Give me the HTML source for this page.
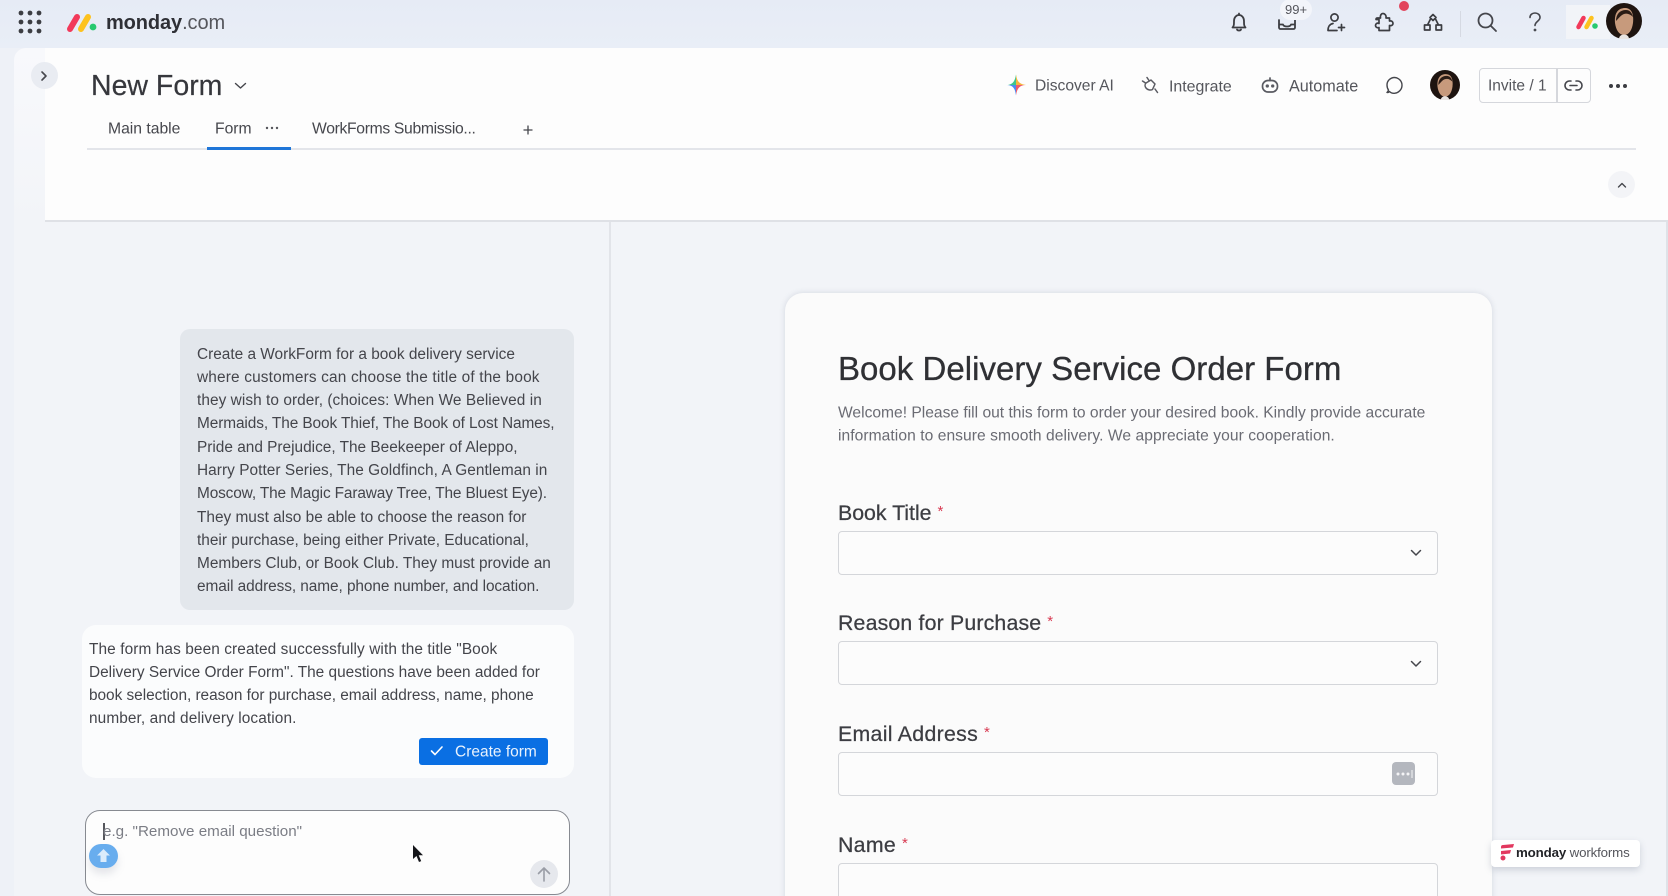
<!DOCTYPE html>
<html lang="en">
<head>
<meta charset="utf-8">
<title>New Form</title>
<style>
*{box-sizing:border-box}
html,body{margin:0;padding:0;width:1668px;height:896px;overflow:hidden}
body{background:#eef1f7;font-family:"Liberation Sans",sans-serif;color:#3a3b40}
#p{position:absolute;left:0;top:0;width:1668px;height:896px;overflow:hidden;background:#eef1f7}
.a{position:absolute}
.t{position:absolute;white-space:nowrap;transform:translateY(-50%);line-height:1.2}
svg{position:absolute;overflow:visible}
.i{fill:none;stroke:#45464c;stroke-width:1.6;stroke-linecap:round;stroke-linejoin:round}
.f{position:absolute;left:838px;width:600px;height:44px;border:1.5px solid #d4d6da;border-radius:4px;background:#fcfcfc}
.l{font-size:21.3px;color:#3c3d42;left:838px;-webkit-text-stroke:.25px #3c3d42}
.l b{color:#d83a52;font-weight:400;font-size:15px;position:relative;top:-4px;margin-left:6px;-webkit-text-stroke:0}
.msg{position:absolute;white-space:pre;font-size:15.4px;line-height:23.3px;color:#44454b}
</style>
</head>
<body>
<div id="p">
<div class="a" style="left:0;top:0;width:1668px;height:48px;background:linear-gradient(180deg,#e6ebf5,#e9eef7)"></div>
<div class="a" style="left:14px;top:48px;width:1654px;height:848px;background:linear-gradient(180deg,#f8f9fc 0,#f2f4f8 180px);border-top-left-radius:12px"></div>
<div class="a" style="left:45px;top:48px;width:1623px;height:173px;background:#fdfdfd"></div>
<div class="a" style="left:45px;top:221px;width:1623px;height:222px;background:#f2f4f8"></div>
<div class="a" style="left:45px;top:220px;width:1623px;height:2px;background:#dfe1e6"></div>
<div class="a" style="left:609px;top:222px;width:2px;height:674px;background:#e2e4e9"></div>
<div class="a" style="left:1666px;top:222px;width:2px;height:674px;background:#dfe2e8"></div>

<!-- grid -->
<svg style="left:0;top:0" width="60" height="48" fill="#3c3d42">
<circle cx="21" cy="13" r="2.4"/><circle cx="30" cy="13" r="2.4"/><circle cx="39" cy="13" r="2.4"/>
<circle cx="21" cy="22" r="2.4"/><circle cx="30" cy="22" r="2.4"/><circle cx="39" cy="22" r="2.4"/>
<circle cx="21" cy="31" r="2.4"/><circle cx="30" cy="31" r="2.4"/><circle cx="39" cy="31" r="2.4"/>
</svg>
<!-- logo -->
<svg style="left:66px;top:12px" width="32" height="22">
<path d="M4 17 L11 5" stroke="#f2395a" stroke-width="6" stroke-linecap="round"/>
<path d="M15 17 L22 5" stroke="#fdc21f" stroke-width="6" stroke-linecap="round"/>
<circle cx="27" cy="15" r="3.4" fill="#27c96f"/>
</svg>
<div class="t" style="left:106px;top:23px;font-size:20px;color:#2f3036;letter-spacing:-.1px"><b>monday</b><span style="color:#55565c">.com</span></div>

<!-- top right icons -->
<svg class="i" style="left:1229px;top:12px;stroke:#3c3d42;stroke-width:1.800" width="20" height="20" viewBox="0 0 20 20"><path d="M3.500 15.500c1.500-1.500 1.500-3 1.500-6.500C5 5.800 7 3 10 3s5 2.800 5 6c0 3.500 0 5 1.500 6.500zM8 17.500c.5 1.300 3.500 1.300 4 0M10 1.500V3"/></svg>
<svg class="i" style="left:1277px;top:14px;stroke:#3c3d42;stroke-width:1.800" width="20" height="17" viewBox="0 0 20 17"><path d="M2 6v7.500A1.500 1.500 0 0 0 3.500 15h13a1.500 1.500 0 0 0 1.500-1.500V6M2 10.500h4c.5 1.500 2 2 4 2s3.500-.5 4-2h4"/></svg>
<div class="a" style="left:1280px;top:-1px;width:32px;height:21px;background:#f3f5fa;border-radius:12px"></div>
<div class="t" style="left:1285px;top:10px;font-size:13px;color:#55565c">99+</div>
<svg class="i" style="left:1326px;top:12px;stroke:#3c3d42;stroke-width:1.700" width="20" height="20" viewBox="0 0 20 20"><circle cx="8.500" cy="5.500" r="3.600"/><path d="M2 18.500c0-4 2-6.500 5-7M2 18.500h9M15.500 12.500v6M12.500 15.500h6"/></svg>
<svg class="i" style="left:1374px;top:12px;stroke:#3c3d42;stroke-width:1.700" width="20" height="20" viewBox="0 0 20 20"><path d="M2 7.500c0-1 .5-1.500 1.500-1.500H6.500C6 3 7.500 1.500 9 1.500S12.500 3 12 6h3.500v3c2.500-.5 3.500 1 3.500 2.500S17.500 14 15.500 13.500V18.500H5v-3c-2 .7-3.500-.5-3.500-2S3 10.500 5 11.500V7.500z"/></svg>
<div class="a" style="left:1399px;top:1px;width:10px;height:10px;border-radius:50%;background:#e2445c"></div>
<svg class="i" style="left:1423px;top:13px;stroke:#3c3d42;stroke-width:1.700" width="20" height="18" viewBox="0 0 20 18"><path d="M10 1.500l3 3-3 3-3-3zM1.500 12h5.500v5H1.500zM13 12h5.500v5H13zM7.500 6L4.500 12M12.500 6l3 6"/></svg>
<div class="a" style="left:1460px;top:11px;width:1px;height:26px;background:#d5d9e2"></div>
<svg class="i" style="left:1476px;top:11px;stroke-width:1.800" width="22" height="22" viewBox="0 0 22 22"><circle cx="9.500" cy="9.500" r="7"/><path d="M14.700 14.700L20 20"/></svg>
<svg class="i" style="left:1525px;top:11px" width="20" height="22" viewBox="0 0 20 22"><path d="M5 6.500C5 3.500 7.500 2 10 2s5 1.500 5 4.500c0 3.500-5 4-5 8"/><circle cx="10" cy="19" r=".6"/></svg>
<div class="a" style="left:1566px;top:5px;width:44px;height:34px;background:#f2f4f8"></div>
<svg style="left:1575px;top:13px" width="24" height="18">
<path d="M3.500 14 L8.500 5" stroke="#f2395a" stroke-width="4.500" stroke-linecap="round"/>
<path d="M11.500 14 L16.500 5" stroke="#fdc21f" stroke-width="4.500" stroke-linecap="round"/>
<circle cx="20" cy="13" r="2.800" fill="#27c96f"/>
</svg>
<svg style="left:1606px;top:3px" width="36" height="36" viewBox="0 0 36 36">
<circle cx="18" cy="18" r="18" fill="#1e1410"/>
<path d="M9 20C8 9 13 5 19 5c6 0 9 5 8 15-1 7-4 12-9 12s-8-5-9-12z" fill="#c79a7c"/>
<path d="M10 18c0-7 4-11 10-11 4 0 6 3 7 7-3-3-6-4-9-3-3 1-5 4-8 7z" fill="#2b1c15"/>
<path d="M13 36c0-6 10-6 10 0z" fill="#e9e5e2"/>
</svg>

<!-- collapse -->
<div class="a" style="left:31px;top:62px;width:27px;height:27px;border-radius:50%;background:#e9ecf2"></div>
<svg class="i" style="left:40px;top:71px" width="9" height="10"><path d="M2 1l4 4-4 4"/></svg>

<!-- board header -->
<div class="t" style="left:91px;top:86px;font-size:28.500px;color:#36373c;-webkit-text-stroke:.2px #36373c">New Form</div>
<svg class="i" style="left:234px;top:82px;stroke-width:1.400" width="13" height="8"><path d="M1.500 1.500L6.500 6l5-4.500"/></svg>

<div class="t" style="left:108px;top:129.500px;font-size:15.700px;color:#46474d">Main table</div>
<div class="t" style="left:215px;top:129.500px;font-size:15.700px;color:#46474d">Form</div>
<svg style="left:265px;top:125px" width="15" height="6" fill="#55565c"><circle cx="2" cy="3" r="1.200"/><circle cx="7" cy="3" r="1.200"/><circle cx="12" cy="3" r="1.200"/></svg>
<div class="t" style="left:312px;top:129.500px;font-size:15.700px;color:#46474d;letter-spacing:-.32px">WorkForms Submissio...</div>
<svg class="i" style="left:523px;top:125px;stroke-width:1.300" width="10" height="10"><path d="M5 1v8M1 5h8"/></svg>
<div class="a" style="left:87px;top:148px;width:1549px;height:2px;background:#e3e5ea"></div>
<div class="a" style="left:207px;top:147px;width:84px;height:2.500px;background:#1f76d8"></div>

<!-- header actions -->
<svg style="left:1005px;top:74px" width="22" height="22" viewBox="0 0 22 22">
<path d="M11 0.500 C11.500 7 11.500 7 11 11 L3 11 C8 10 10 7 11 0.500z" fill="#3dc68a"/>
<path d="M11 0.500 C12 7 14 10 21 11 L11 11z" fill="#f5b53f"/>
<path d="M1 11 C7 11 10 13 11 21.500 L11 11z" fill="#4b8bf0"/>
<path d="M21 11 C15 11 12 14 11 21.500 L11 11z" fill="#ef5a6b"/>
</svg>
<div class="t" style="left:1035px;top:86.500px;font-size:15.600px;color:#55565c">Discover AI</div>
<svg class="i" style="left:1141px;top:76px;stroke-width:1.500;stroke:#5a5b62" width="18" height="18" viewBox="0 0 18 18"><path d="M1.500 5l3 2M6 1.500l2 3M14 13l2.500 3.500M5 7l5-3 4 4-2.500 5.500c-2 1-5 .5-6.500-1.500S4 8 5 7z"/></svg>
<div class="t" style="left:1169px;top:86.500px;font-size:15.900px;color:#55565c">Integrate</div>
<svg class="i" style="left:1261px;top:76px;stroke-width:1.700;stroke:#5a5b62" width="18" height="18" viewBox="0 0 18 18"><rect x="1.500" y="4.500" width="15" height="11.500" rx="5.500"/><path d="M9 4.500V2"/><circle cx="6.300" cy="10" r=".8"/><circle cx="11.700" cy="10" r=".8"/></svg>
<div class="t" style="left:1289px;top:86.500px;font-size:16.200px;color:#55565c">Automate</div>
<svg class="i" style="left:1384px;top:75px;stroke-width:1.400" width="20" height="20" viewBox="0 0 20 20"><path d="M3 17.500c1 .2 2-.3 2.500-1C7 18 9 18.500 11 18.200c4-.5 7-4 7-8C18 6 14.500 2.500 10.500 2.500S3 5.800 3 10c0 2 .6 3.800 1.500 5-.3 1-.8 2-1.500 2.500z"/></svg>
<svg style="left:1430px;top:70px" width="30" height="30" viewBox="0 0 36 36">
<circle cx="18" cy="18" r="18" fill="#1e1410"/>
<path d="M9 20C8 9 13 5 19 5c6 0 9 5 8 15-1 7-4 12-9 12s-8-5-9-12z" fill="#c79a7c"/>
<path d="M10 18c0-7 4-11 10-11 4 0 6 3 7 7-3-3-6-4-9-3-3 1-5 4-8 7z" fill="#2b1c15"/>
<path d="M13 36c0-6 10-6 10 0z" fill="#e9e5e2"/>
</svg>
<div class="a" style="left:1479px;top:68px;width:112px;height:35px;border:1.500px solid #d5d7dc;border-radius:4px"></div>
<div class="a" style="left:1556px;top:68px;width:1.500px;height:35px;background:#d5d7dc"></div>
<div class="t" style="left:1488px;top:86.500px;font-size:15.500px;color:#55565c">Invite / 1</div>
<svg class="i" style="left:1564px;top:79px;stroke-width:1.600" width="19" height="13" viewBox="0 0 19 13"><path d="M7 2H5.500a4.500 4.500 0 0 0 0 9H7M12 2h1.500a4.500 4.500 0 0 1 0 9H12M6 6.500h7"/></svg>
<svg style="left:1608px;top:83px" width="20" height="6" fill="#3c3d42"><circle cx="3" cy="3" r="2"/><circle cx="10" cy="3" r="2"/><circle cx="17" cy="3" r="2"/></svg>
<div class="a" style="left:1608px;top:171px;width:27px;height:27px;border-radius:50%;background:#f3f4f7"></div>
<svg class="i" style="left:1617px;top:182px;stroke-width:1.400" width="10" height="7"><path d="M1.500 5L5 1.500 8.500 5"/></svg>

<!-- user message -->
<div class="a" style="left:180px;top:329px;width:394px;height:281px;background:#e3e7ec;border-radius:10px"></div>
<div class="msg" style="left:197px;top:342.500px">Create a WorkForm for a book delivery service
<span style="letter-spacing:.17px">where customers can choose the title of the book</span>
<span style="letter-spacing:.06px">they wish to order, (choices: When We Believed in</span>
<span style="letter-spacing:-.09px">Mermaids, The Book Thief, The Book of Lost Names,</span>
Pride and Prejudice, The Beekeeper of Aleppo,
<span style="letter-spacing:.05px">Harry Potter Series, The Goldfinch, A Gentleman in</span>
<span style="letter-spacing:-.13px">Moscow, The Magic Faraway Tree, The Bluest Eye).</span>
They must also be able to choose the reason for
their purchase, being either Private, Educational,
Members Club, or Book Club. They must provide an
<span style="letter-spacing:-.07px">email address, name, phone number, and location.</span></div>

<!-- ai message -->
<div class="a" style="left:82px;top:625px;width:492px;height:153px;background:#fbfcfd;border-radius:14px"></div>
<div class="msg" style="left:89px;top:637.500px"><span style="letter-spacing:.1px">The form has been created successfully with the title "Book</span>
Delivery Service Order Form". The questions have been added for
<span style="letter-spacing:-.03px">book selection, reason for purchase, email address, name, phone</span>
<span style="letter-spacing:.1px">number, and delivery location.</span></div>
<div class="a" style="left:419px;top:738px;width:129px;height:27px;background:#0a6fe3;border-radius:3px"></div>
<svg style="left:430px;top:745px;fill:none;stroke:#fff;stroke-width:1.600;stroke-linecap:round;stroke-linejoin:round" width="14" height="12"><path d="M1.500 6l3.500 3.500L12 2"/></svg>
<div class="t" style="left:455px;top:753px;font-size:15.500px;color:#e9f2fd">Create form</div>

<!-- input -->
<div class="a" style="left:85px;top:810px;width:485px;height:85px;background:#fdfdfd;border:1.500px solid #878a91;border-radius:15px"></div>
<div class="a" style="left:103px;top:823px;width:1.500px;height:17px;background:#55565c"></div>
<div class="t" style="left:103px;top:831.500px;font-size:15.200px;color:#7b7d85">e.g. "Remove email question"</div>
<div class="a" style="left:89px;top:844px;width:29px;height:24px;border-radius:12px;background:#68adee;box-shadow:0 6px 8px rgba(120,130,150,.18)"></div>
<svg style="left:96px;top:848px" width="15" height="16" fill="#dcecfb"><path d="M7.500 1L14 7.500h-3.500V14h-6V7.500H1z"/></svg>
<svg style="left:411px;top:844px" width="14" height="20"><path d="M2 1v14l3.500-3 2.500 6 2.200-.9-2.500-5.800h4.300z" fill="#15161a"/></svg>
<div class="a" style="left:530px;top:860px;width:28px;height:28px;border-radius:50%;background:#e6e8ed"></div>
<svg class="i" style="left:537px;top:866px;stroke:#9a9da6" width="14" height="16"><path d="M7 15V2M1.500 7.500L7 2l5.500 5.500"/></svg>

<!-- form card -->
<div class="a" style="left:785px;top:293px;width:707px;height:640px;background:#fbfbfb;border-radius:18px;box-shadow:0 0 6px rgba(140,150,170,.3)"></div>
<div class="t" style="left:838px;top:369px;font-size:33px;letter-spacing:.03px;color:#2f3034;-webkit-text-stroke:.3px #2f3034">Book Delivery Service Order Form</div>
<div class="t" style="left:838px;top:413.500px;font-size:15.600px;color:#6a6b73">Welcome! Please fill out this form to order your desired book. Kindly provide accurate</div>
<div class="t" style="left:838px;top:436.500px;font-size:15.600px;letter-spacing:.06px;color:#6a6b73">information to ensure smooth delivery. We appreciate your cooperation.</div>

<div class="t l" style="top:513.500px">Book Title<b>*</b></div>
<div class="f" style="top:531px"></div>
<svg class="i" style="left:1410px;top:549px;stroke-width:1.500" width="12" height="8"><path d="M1.500 1.500L6 6l4.500-4.500"/></svg>

<div class="t l" style="top:624px;letter-spacing:.17px">Reason for Purchase<b>*</b></div>
<div class="f" style="top:641px"></div>
<svg class="i" style="left:1410px;top:660px;stroke-width:1.500" width="12" height="8"><path d="M1.500 1.500L6 6l4.500-4.500"/></svg>

<div class="t l" style="top:734.500px;letter-spacing:.3px">Email Address<b>*</b></div>
<div class="f" style="top:752px"></div>
<div class="a" style="left:1392px;top:762px;width:23px;height:23px;border-radius:4px;background:#b4b7be"></div>
<svg style="left:1395px;top:770px" width="18" height="8" fill="#f4f4f6"><circle cx="3" cy="4" r="1.500"/><circle cx="8" cy="4" r="1.500"/><circle cx="13" cy="4" r="1.500"/><rect x="16.500" y="0" width="1" height="8"/></svg>

<div class="t l" style="top:845.500px;letter-spacing:.3px">Name<b>*</b></div>
<div class="f" style="top:863px;height:60px"></div>

<!-- badge -->
<div class="a" style="left:1491px;top:840px;width:149px;height:27px;border-radius:4px;background:#fff;box-shadow:0 3px 7px rgba(120,130,150,.3)"></div>
<svg style="left:1500px;top:844px" width="15" height="17" fill="#e2385f"><path d="M1 3 Q1 1 3 1 L14 0 L13 3.500 L1 4.500z"/><path d="M1 7 L11 6 L10 9.500 L1 10.500z"/><circle cx="3" cy="14" r="2.500"/></svg>
<div class="t" style="left:1516px;top:852.500px;font-size:13.300px;color:#222327;letter-spacing:-.15px"><b>monday</b> <span style="color:#55565c">workforms</span></div>
</div>
</body>
</html>
